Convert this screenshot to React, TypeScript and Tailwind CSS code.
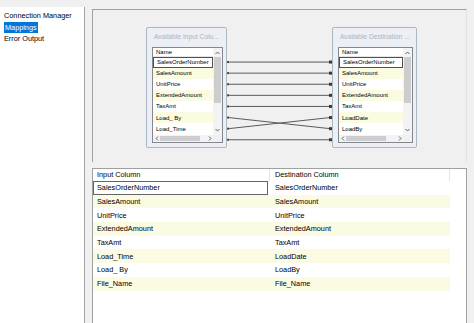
import React from "react";

const leftItems = ["SalesOrderNumber", "SalesAmount", "UnitPrice", "ExtendedAmount", "TaxAmt", "Load_ By", "Load_Time", "File_Name"];
const rightItems = ["SalesOrderNumber", "SalesAmount", "UnitPrice", "ExtendedAmount", "TaxAmt", "LoadDate", "LoadBy", "File_Name"];
const mapping = [0, 1, 2, 3, 4, 6, 5, 7];

const gridRows: [string, string][] = [
  ["SalesOrderNumber", "SalesOrderNumber"],
  ["SalesAmount", "SalesAmount"],
  ["UnitPrice", "UnitPrice"],
  ["ExtendedAmount", "ExtendedAmount"],
  ["TaxAmt", "TaxAmt"],
  ["Load_Time", "LoadDate"],
  ["Load_ By", "LoadBy"],
  ["File_Name", "File_Name"],
];

function Chevron({ dir }: { dir: "up" | "down" | "left" | "right" }) {
  const pts =
    dir === "up"
      ? "0.5,3 2.5,1 4.5,3"
      : dir === "down"
      ? "0.5,1 2.5,3 4.5,1"
      : dir === "left"
      ? "3,0.5 1,2.5 3,4.5"
      : "1,0.5 3,2.5 1,4.5";
  const w = dir === "up" || dir === "down" ? 5 : 4;
  const h = dir === "up" || dir === "down" ? 4 : 5;
  return (
    <svg width={w} height={h} viewBox={`0 0 ${w} ${h}`}>
      <polyline points={pts} fill="none" stroke="#606060" strokeWidth="1" />
    </svg>
  );
}

function ColumnBox({ title, items, width }: { title: string; items: string[]; width: string }) {
  return (
    <div className={`${width} h-[121px] shrink-0 rounded-[2px] border border-[#a9b7c6] bg-[#eceff3] pl-[5px] pr-[3px] pb-[4px] flex flex-col`}>
      <div className="h-[19px] flex items-center pl-[2px] text-[6.7px] text-[#aab5c1] whitespace-nowrap">{title}</div>
      <div className="flex-1 bg-white border border-[#828790] flex flex-col overflow-hidden">
        <div className="flex flex-1 min-h-0">
          <div className="flex-1 min-w-0 flex flex-col">
            <div className="h-[8.5px] shrink-0 flex items-center pl-[3px] border-b border-[#e6e6e6] text-[6px]">Name</div>
            <div className="flex-1 min-h-0 flex flex-col">
              {items.slice(0, 7).map((it, i) => (
                <div
                  key={i}
                  className={`h-[11.1px] shrink-0 flex items-center pl-[3px] text-[6px] whitespace-nowrap ${
                    i === 0 ? "border border-[#505050] pl-[2px]" : ""
                  } ${i % 2 === 1 ? "bg-[#fbfbe1]" : "bg-white"}`}
                >
                  {it}
                </div>
              ))}
            </div>
          </div>
          <div className="w-[9px] shrink-0 bg-[#f3f3f3] flex flex-col">
            <div className="h-[9px] flex items-center justify-center">
              <Chevron dir="up" />
            </div>
            <div className="h-[46px] mx-[1px] bg-[#cdcdcd]" />
            <div className="flex-1" />
            <div className="h-[9px] flex items-center justify-center">
              <Chevron dir="down" />
            </div>
          </div>
        </div>
        <div className="h-[7.5px] shrink-0 flex bg-[#f3f3f3]">
          <div className="w-[7px] flex items-center justify-center">
            <Chevron dir="left" />
          </div>
          <div className="w-[40px] my-[1px] bg-[#cdcdcd]" />
          <div className="flex-1" />
          <div className="w-[7px] flex items-center justify-center">
            <Chevron dir="right" />
          </div>
          <div className="w-[9px] bg-[#f0f0f0]" />
        </div>
      </div>
    </div>
  );
}

function Links() {
  const y = (i: number) => 35.05 + 11.1 * i;
  return (
    <svg width="105" height="121" viewBox="0 0 105 121" className="shrink-0">
      {mapping.map((j, i) => (
        <g key={i}>
          <line x1="1.5" y1={y(i)} x2="103" y2={y(j)} stroke="#5a5a5a" strokeWidth="1" />
          <rect x="0" y={y(i) - 1} width="2" height="2" fill="#4a4a4a" />
          <rect x="102" y={y(j) - 1.5} width="3" height="3" fill="#3a3a3a" />
        </g>
      ))}
    </svg>
  );
}

export default function App() {
  return (
    <div className="w-[474px] h-[323px] overflow-hidden bg-[#f0f0f0] flex [font-family:'Liberation_Sans',Arial,sans-serif] text-[7.3px] text-black leading-none">
      <aside className="mt-[7px] w-[85px] shrink-0 bg-white border-r border-[#a0a0a0] pt-[3px] pl-[4px] flex flex-col">
        <div className="h-[11.5px] flex items-center whitespace-nowrap">Connection Manager</div>
        <div className="h-[11.5px] flex items-center">
          <span className="bg-[#0078d7] text-white px-[1px] h-[11px] flex items-center">Mappings</span>
        </div>
        <div className="h-[11.5px] flex items-center">Error Output</div>
      </aside>

      <div className="ml-[7px] w-[375px] shrink-0 flex flex-col pt-[9px]">
        <div className="h-[153px] shrink-0 border-t border-l border-[#a0a0a0] border-r border-r-[#e2e2e2] bg-[#f0f0f0] flex items-start pt-[17px] pl-[53px]">
          <ColumnBox title="Available Input Colu..." items={leftItems} width="w-[81px]" />
          <Links />
          <ColumnBox title="Available Destination ..." items={rightItems} width="w-[85px]" />
        </div>

        <div className="mt-[6px] flex-1 bg-white border border-b-0 border-[#a0a0a0] flex flex-col">
          <div className="h-[12px] flex">
            <div className="w-[177px] pl-[4px] flex items-center border-r border-[#e5e5e5]">Input Column</div>
            <div className="w-[180px] pl-[5px] flex items-center border-r border-[#e5e5e5]">Destination Column</div>
          </div>
          {gridRows.map(([a, b], i) => (
            <div key={i} className={`h-[13.7px] flex w-[357px] ${i % 2 === 1 ? "bg-[#fbfbe3]" : "bg-white"}`}>
              <div className={`flex items-center ${i === 0 ? "border border-[#646464] pl-[3px] mr-[2px] w-[175px]" : "pl-[4px] w-[177px]"}`}>{a}</div>
              <div className="w-[180px] pl-[5px] flex items-center">{b}</div>
            </div>
          ))}
        </div>
      </div>
    </div>
  );
}
